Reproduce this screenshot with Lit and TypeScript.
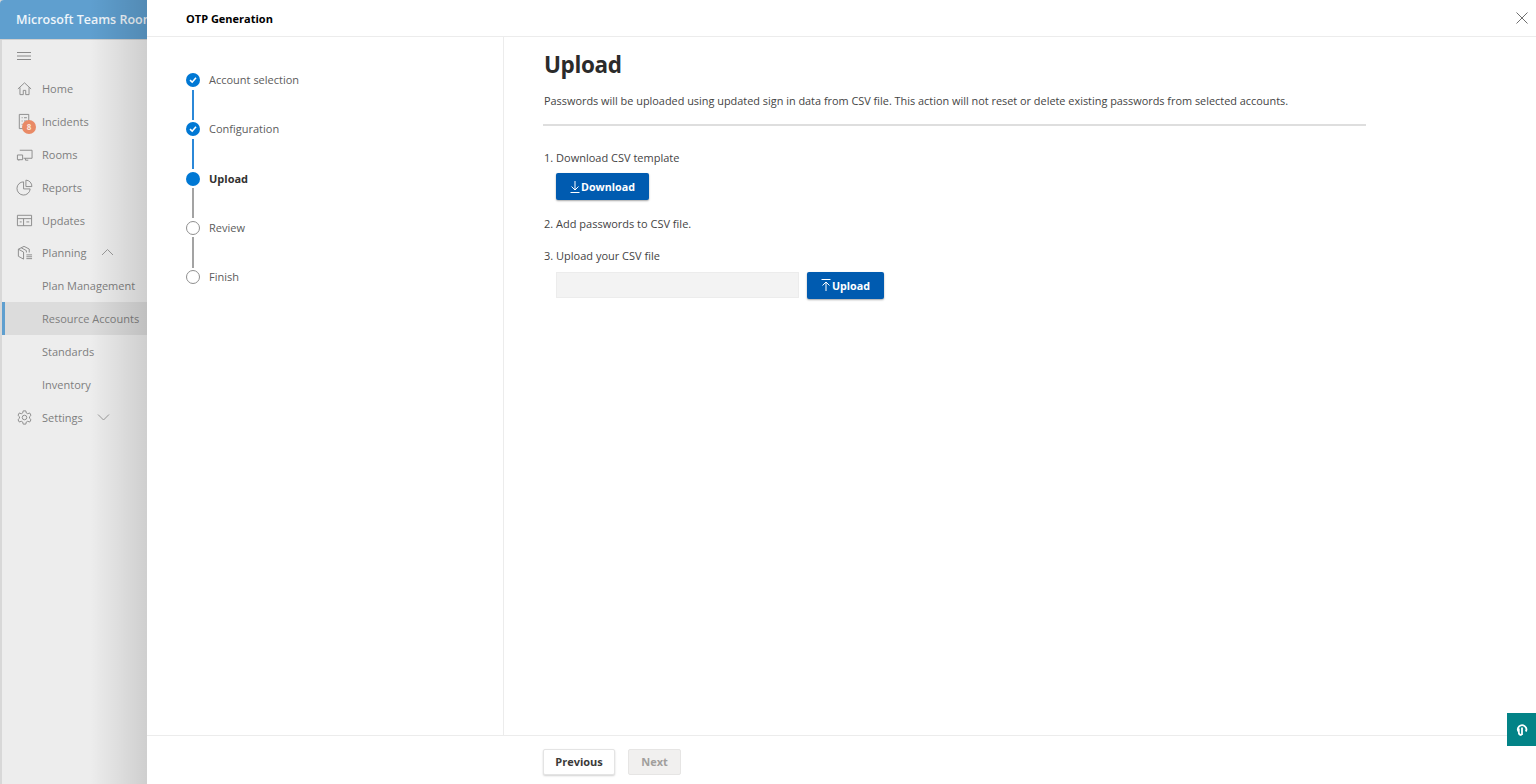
import { LitElement, html, css, svg } from "lit";
import { customElement } from "lit/decorators.js";

const icons: Record<string, unknown> = {
  home: svg`<path d="M2 9.500 9 3l7 6.500M4.200 7.800v7.700h3.500v-4.500h2.600v4.500h3.500V7.800"/>`,
  incidents: svg`<path d="M3.500 1.500h10v15h-10zM6 5h1M8.500 5h3M6 8.500h1M8.500 8.500h3M6 12h1M8.500 12h2"/>`,
  rooms: svg`<path d="M4 4.500h13v8.500H8M1.500 9.500h5.500v5H1.500zM3 14.500v1M10 13v2h3"/>`,
  reports: svg`<path d="M8 3a7 7 0 1 0 7 7.500H8zM10.500 1.200a6.500 6.500 0 0 1 6.300 6.800h-6.300z"/>`,
  updates: svg`<path d="M1.500 3.500h15v11h-15zM1.500 7h15M8 7v7.500M11 10.500h3M4 10.500h2"/>`,
  planning: svg`<path d="M2.500 5.500 8.500 2.500l5.500 2.800V9M2.500 5.500V13l5.500 3M2.500 5.500 8 8.500v7.500M5.500 4 11 7v2M11 11.500h6M11 13.500h6M11 15.500h6"/>`,
  settings: svg`<path d="M7.600 2h2.800l.5 2.200 1.500.8 2.100-.8 1.400 2.500-1.600 1.500v1.600l1.600 1.500-1.400 2.500-2.100-.8-1.500.8-.5 2.200H7.600l-.5-2.200-1.500-.8-2.100.8-1.400-2.500 1.600-1.500V8.200L2.100 6.700l1.400-2.500 2.100.8 1.500-.8z"/><circle cx="9" cy="9" r="2.400"/>`,
};

const nav = [
  { label: "Home", icon: "home" },
  { label: "Incidents", icon: "incidents", badge: "8" },
  { label: "Rooms", icon: "rooms" },
  { label: "Reports", icon: "reports" },
  { label: "Updates", icon: "updates" },
  { label: "Planning", icon: "planning", chevron: "M1 7l5.500-5.500L12 7" },
  { label: "Plan Management" },
  { label: "Resource Accounts", active: true },
  { label: "Standards" },
  { label: "Inventory" },
  { label: "Settings", icon: "settings", chevron: "M1 1.500 6.500 7 12 1.500" },
];

const steps = [
  { label: "Account selection", state: "done" },
  { label: "Configuration", state: "done" },
  { label: "Upload", state: "current" },
  { label: "Review", state: "todo" },
  { label: "Finish", state: "todo" },
];

@customElement("app-root")
export class AppRoot extends LitElement {
  static styles = css`
    :host {
      display: block;
      position: relative;
      width: 1536px;
      height: 784px;
      overflow: hidden;
      font-family: "Open Sans", "Noto Sans", sans-serif;
      font-size: 11px;
      color: #323130;
      background: #fff;
    }
    .sidebar {
      width: 200px;
      height: 784px;
      box-sizing: border-box;
      background: #ededed;
      border-left: 2px solid #d8d8d8;
    }
    .brand {
      height: 39px;
      margin-left: -2px;
      padding-left: 16px;
      display: flex;
      align-items: center;
      white-space: nowrap;
      background: #5f9fcf;
      color: #eef5fa;
      border-top-left-radius: 4px;
      font-size: 12.5px;
      font-weight: 600;
      border-bottom: 1px solid #d0d0d0;
    }
    .burger {
      display: block;
      margin: 10px 0 0 15px;
      height: 22px;
    }
    .nav-item {
      height: 32.900px;
      display: flex;
      align-items: center;
      padding-left: 40px;
      position: relative;
      color: #7e7e7e;
      white-space: nowrap;
    }
    .nav-item.active {
      background: #dcdcdc;
    }
    .nav-item.active::before {
      content: "";
      position: absolute;
      left: 0;
      top: 0;
      bottom: 0;
      width: 3px;
      background: #5f9fcf;
    }
    .nav-icon {
      position: absolute;
      left: 14px;
      top: 8px;
      width: 17px;
      height: 17px;
      fill: none;
      stroke: #8a8a8a;
      stroke-width: 1;
    }
    .badge {
      position: absolute;
      left: 20px;
      top: 15px;
      width: 14px;
      height: 14px;
      border-radius: 50%;
      background: #e98a66;
      color: #fbe6dc;
      font-size: 8px;
      font-weight: 700;
      display: flex;
      align-items: center;
      justify-content: center;
    }
    .chevron {
      width: 13px;
      height: 9px;
      margin-left: 14px;
      fill: none;
      stroke: #9a9a9a;
      stroke-width: 1;
    }
    .shade {
      position: absolute;
      left: 90px;
      top: 0;
      width: 57px;
      height: 784px;
      background: linear-gradient(to right, rgba(0, 0, 0, 0), rgba(0, 0, 0, 0.13));
    }
    .panel {
      position: absolute;
      left: 147px;
      top: 0;
      width: 1389px;
      height: 784px;
      display: flex;
      flex-direction: column;
      background: #fff;
    }
    .panel-head {
      height: 36px;
      flex: none;
      display: flex;
      align-items: center;
      justify-content: space-between;
      padding: 0 8px 0 39px;
      border-bottom: 1px solid #ececec;
      font-size: 11px;
      font-weight: 700;
      color: #000;
    }
    .close {
      width: 12px;
      height: 12px;
      stroke: #6f6f6f;
      stroke-width: 1;
      fill: none;
    }
    .panel-body {
      flex: 1;
      display: flex;
      min-height: 0;
    }
    .stepper {
      width: 357px;
      flex: none;
      box-sizing: border-box;
      padding: 36px 0 0 39px;
      border-right: 1px solid #ececec;
    }
    .step {
      height: 14px;
      display: flex;
      align-items: center;
      gap: 9px;
      color: #5c5c5c;
    }
    .step-label {
      padding-bottom: 1px;
    }
    .step.current {
      font-weight: 700;
      color: #323130;
    }
    .dot {
      width: 14px;
      height: 14px;
      flex: none;
      box-sizing: border-box;
      border-radius: 50%;
      display: flex;
      align-items: center;
      justify-content: center;
    }
    .dot svg {
      width: 8px;
      height: 8px;
      fill: none;
      stroke: #fff;
      stroke-width: 1.6;
    }
    .done .dot,
    .current .dot {
      background: #0078d4;
    }
    .todo .dot {
      border: 1.500px solid #8f8f8f;
    }
    .link {
      width: 2px;
      height: 30.300px;
      margin: 2.500px 0 2.500px 6px;
      background: #a3a3a3;
    }
    .link.on {
      background: #2b88d8;
    }
    .content {
      flex: 1;
      padding: 0 0 0 40px;
    }
    h1 {
      margin: 11px 0 0;
      font-size: 22.500px;
      letter-spacing: -0.4px;
      line-height: 33px;
      font-weight: 700;
      color: #2b2b2b;
    }
    .desc {
      margin: 12px 0 0;
      font-size: 10.900px;
      line-height: 15px;
      color: #444;
      white-space: nowrap;
    }
    .rule {
      width: 823px;
      height: 2px;
      margin: 16px 0 0 -1px;
      background: #dedede;
    }
    .line {
      line-height: 15px;
      color: #444;
    }
    .line.first {
      margin-top: 24px;
    }
    .line.second {
      margin-top: 16px;
    }
    .line.third {
      margin-top: 17px;
    }
    .row {
      display: flex;
      gap: 8px;
      margin-left: 12px;
      margin-top: 8px;
    }
    .row.file {
      margin-top: 9px;
    }
    .field {
      width: 243px;
      height: 26px;
      box-sizing: border-box;
      background: #f3f3f3;
      border: 1px solid #ececec;
    }
    .primary {
      height: 27px;
      box-sizing: border-box;
      display: flex;
      align-items: center;
      justify-content: center;
      gap: 1px;
      border: 0;
      border-radius: 2px;
      background: #005bb0;
      color: #fff;
      font: inherit;
      font-size: 10.700px;
      font-weight: 700;
      box-shadow: 0 1px 2px rgba(0, 0, 0, 0.35);
      padding: 0;
    }
    .primary.download {
      width: 93px;
    }
    .primary.upload {
      width: 77px;
    }
    .primary svg {
      width: 10px;
      height: 13px;
      fill: none;
      stroke: #fff;
      stroke-width: 1;
    }
    .panel-foot {
      height: 49px;
      flex: none;
      box-sizing: border-box;
      border-top: 1px solid #ececec;
      display: flex;
      align-items: center;
      gap: 13px;
      padding: 3px 0 0 396px;
    }
    .ghost {
      height: 26px;
      box-sizing: border-box;
      border-radius: 2px;
      font: inherit;
      font-weight: 700;
      padding: 0;
    }
    .prev {
      width: 72px;
      background: #fff;
      color: #3b3a39;
      border: 1px solid #e4e4e4;
      box-shadow: 0 1px 2px rgba(0, 0, 0, 0.18);
    }
    .next {
      width: 53px;
      background: #f1f0ef;
      color: #a19f9d;
      border: 1px solid #e6e5e4;
    }
    .help {
      position: absolute;
      right: 0;
      top: 713px;
      width: 29px;
      height: 33px;
      display: flex;
      align-items: center;
      justify-content: center;
      background: #038387;
    }
    .help svg {
      width: 12px;
      height: 14px;
      fill: none;
      stroke: #fff;
      stroke-width: 1.800;
    }
  `;

  private renderNav() {
    return nav.map(
      (n) => html`
        <div class="nav-item ${n.active ? "active" : ""}">
          ${n.icon ? html`<svg class="nav-icon" viewBox="0 0 18 18">${icons[n.icon]}</svg>` : ""}
          ${n.badge ? html`<span class="badge">${n.badge}</span>` : ""}
          ${n.label}
          ${n.chevron ? html`<svg class="chevron" viewBox="0 0 13 9"><path d=${n.chevron} /></svg>` : ""}
        </div>
      `
    );
  }

  private renderSteps() {
    return steps.map(
      (s, i) => html`
        <div class="step ${s.state}">
          <span class="dot">
            ${s.state === "done"
              ? html`<svg viewBox="0 0 8 8"><path d="M1 4.200 3.200 6.200 7 1.800" /></svg>`
              : ""}
          </span>
          <span class="step-label">${s.label}</span>
        </div>
        ${i < steps.length - 1
          ? html`<div class="link ${s.state === "done" ? "on" : ""}"></div>`
          : ""}
      `
    );
  }

  render() {
    return html`
      <aside class="sidebar">
        <div class="brand">Microsoft Teams Rooms</div>
        <svg class="burger" width="14" height="22" viewBox="0 0 14 22" fill="none" stroke="#8a8a8a">
          <path d="M0 2.500h14M0 6h14M0 9.500h14" />
        </svg>
        ${this.renderNav()}
      </aside>
      <div class="shade"></div>
      <section class="panel">
        <header class="panel-head">
          <span>OTP Generation</span>
          <svg class="close" viewBox="0 0 12 12"><path d="M.5.500l11 11M11.500.500l-11 11" /></svg>
        </header>
        <div class="panel-body">
          <nav class="stepper">${this.renderSteps()}</nav>
          <main class="content">
            <h1>Upload</h1>
            <p class="desc">
              Passwords will be uploaded using updated sign in data from CSV file. This action will
              not reset or delete existing passwords from selected accounts.
            </p>
            <div class="rule"></div>
            <div class="line first">1. Download CSV template</div>
            <div class="row">
              <button class="primary download">
                <svg viewBox="0 0 10 13"><path d="M5 1v9M1.500 6.500 5 10l3.500-3.500M.5 12.500h9" /></svg>
                Download
              </button>
            </div>
            <div class="line second">2. Add passwords to CSV file.</div>
            <div class="line third">3. Upload your CSV file</div>
            <div class="row file">
              <div class="field"></div>
              <button class="primary upload">
                <svg viewBox="0 0 10 13"><path d="M5 12V3M1.500 6.500 5 3l3.500 3.500M.5.500h9" /></svg>
                Upload
              </button>
            </div>
          </main>
        </div>
        <footer class="panel-foot">
          <button class="ghost prev">Previous</button>
          <button class="ghost next">Next</button>
        </footer>
      </section>
      <div class="help">
        <svg viewBox="0 0 12 14">
          <path d="M2.800 9A4.200 4.200 0 1 1 9.800 8.500M2.800 5.500v4c0 1.500 1 2.500 2.800 2.500M6 4.500V12" />
        </svg>
      </div>
    `;
  }
}
